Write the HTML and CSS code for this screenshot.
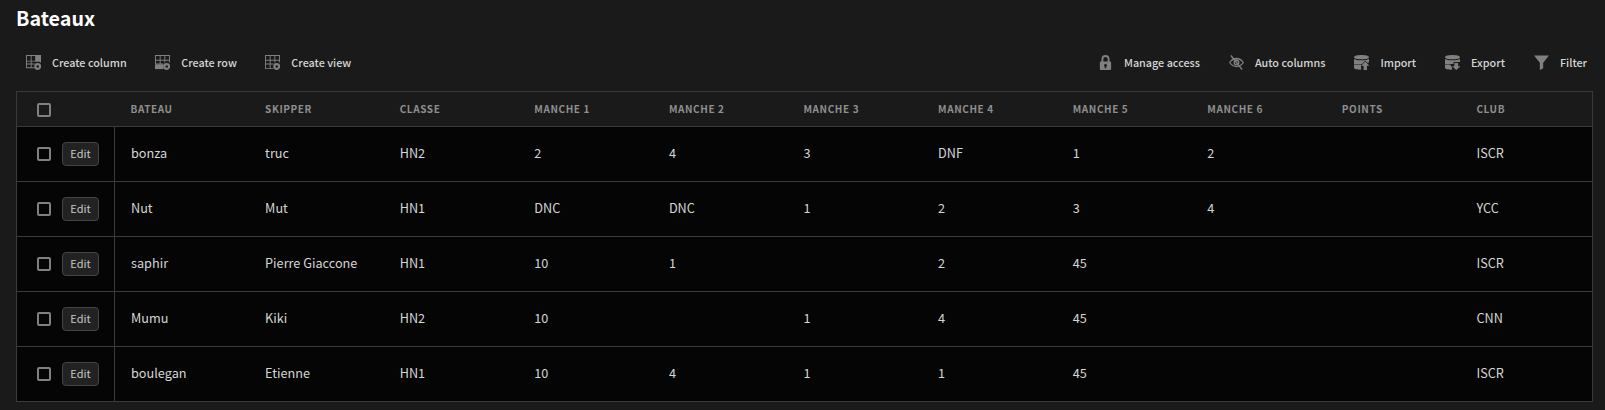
FILE: index.html
```html
<!DOCTYPE html>
<html lang="en">
<head>
    <meta charset="UTF-8">
    <meta name="viewport" content="width=device-width, initial-scale=1.0">
    <title>Bateaux</title>
    <link rel="stylesheet" href="styles.css">
</head>
<body>
    <h1 class="title">Bateaux</h1>
    <div class="toolbar">
        <div class="actions">
            <button class="action">
                <svg class="icon" viewBox="0 0 16 16"><path d="M0 0h16v8h-1V7h-5V1H6v5h4v1H6v2h3v1H6v3h3v1H0zM1 1v5h4V1zM1 7v2h4V7zM1 10v3h4v-3z"/><path d="M10 0h6v7h-6z"/><path fill-rule="evenodd" d="M12.500 8.500a3.700 3.700 0 1 1 0 7.400 3.700 3.700 0 0 1 0-7.400zm0 2.300a1.400 1.400 0 1 0 0 2.800 1.400 1.400 0 0 0 0-2.800z"/></svg>
                Create column
            </button>
            <button class="action">
                <svg class="icon" viewBox="0 0 16 16"><path d="M0 0h16v8h-1V6h-4v2h-1V6H6v3h3v1H0zM1 1v4h4V1zM6 1v4h4V1zM11 1v4h4V1zM1 6v3h4V6z"/><path d="M0 10h9v5H0z"/><path fill-rule="evenodd" d="M12.500 8.500a3.700 3.700 0 1 1 0 7.400 3.700 3.700 0 0 1 0-7.400zm0 2.300a1.400 1.400 0 1 0 0 2.800 1.400 1.400 0 0 0 0-2.800z"/></svg>
                Create row
            </button>
            <button class="action">
                <svg class="icon" viewBox="0 0 16 16"><path d="M0 0h16v8h-1V6h-4v2h-1V6H6v3h3v1H6v4h3v1H0zM1 1v4h4V1zM6 1v4h4V1zM11 1v4h4V1zM1 6v3h4V6zM1 10v4h4v-4z"/><path fill-rule="evenodd" d="M12.500 8.500a3.700 3.700 0 1 1 0 7.400 3.700 3.700 0 0 1 0-7.400zm0 2.300a1.400 1.400 0 1 0 0 2.800 1.400 1.400 0 0 0 0-2.800z"/></svg>
                Create view
            </button>
        </div>
        <div class="actions actions-right">
            <button class="action">
                <svg class="icon" viewBox="0 0 16 16"><path fill-rule="evenodd" d="M8 0a4.300 4.300 0 0 1 4.300 4.300V7h.7a1 1 0 0 1 1 1v7a1 1 0 0 1-1 1H3a1 1 0 0 1-1-1V8a1 1 0 0 1 1-1h.7V4.300A4.300 4.300 0 0 1 8 0zm0 2a2.300 2.300 0 0 0-2.300 2.300V7h4.600V4.300A2.300 2.300 0 0 0 8 2zm0 7.500a1.500 1.500 0 0 0-.8 2.800V14h1.600v-1.700A1.500 1.500 0 0 0 8 9.500z"/></svg>
                Manage access
            </button>
            <button class="action">
                <svg class="icon" viewBox="0 0 16 16"><path fill="none" stroke="currentColor" stroke-width="1.400" d="M.8 8c2-3 4.500-4.300 7.200-4.300S13.200 5 15.200 8c-2 3-4.500 4.300-7.200 4.300S2.800 11 .8 8zM10.400 8a2.400 2.400 0 1 1-4.800 0 2.400 2.400 0 0 1 4.800 0zM2 .5l12 15"/></svg>
                Auto columns
            </button>
            <button class="action">
                <svg class="icon" viewBox="0 0 16 16"><path d="M8 0c3.800 0 8 .7 8 2.300S11.800 4.600 8 4.600 0 3.900 0 2.300 4.200 0 8 0z"/><path d="M0 4c1 1.500 5 1.700 8 1.700s7-.2 8-1.700v3.300c0 .5-.5.900-1.400 1.200L12 6 8.500 9.500H0zM0 10.200v3.300c0 1.300 3.400 2 7.500 2.200V10.200z"/><path d="M12 7l4.500 4.500h-2.700V16h-3.600v-4.500H7.500z"/></svg>
                Import
            </button>
            <button class="action">
                <svg class="icon" viewBox="0 0 16 16"><path d="M8 0c3.800 0 8 .7 8 2.300S11.800 4.600 8 4.600 0 3.900 0 2.300 4.200 0 8 0z"/><path d="M0 4c1 1.500 5 1.700 8 1.700s7-.2 8-1.700v3.500H9v2H0zM0 10.200v3.300c0 1.300 3.400 2 7.500 2.200v-2.500l-2-3z"/><path d="M10 8.500h4v3.500h2.500L12 16l-4.500-4H10z"/></svg>
                Export
            </button>
            <button class="action">
                <svg class="icon" viewBox="0 0 16 16"><path d="M0 .5h16L9.800 8.200V14l-3.200 2h-.4V8.200z"/></svg>
                Filter
            </button>
        </div>
    </div>

    <div class="table-wrap">
        <table class="grid">
            <thead>
                <tr>
                    <th class="select-cell"><span class="checkbox"></span></th>
                    <th>Bateau</th>
                    <th>Skipper</th>
                    <th>Classe</th>
                    <th>Manche 1</th>
                    <th>Manche 2</th>
                    <th>Manche 3</th>
                    <th>Manche 4</th>
                    <th>Manche 5</th>
                    <th>Manche 6</th>
                    <th>Points</th>
                    <th class="last-col">Club</th>
                </tr>
            </thead>
            <tbody>
                <tr>
                    <td class="select-cell"><span class="checkbox"></span><button class="edit">Edit</button></td>
                    <td>bonza</td><td>truc</td><td>HN2</td><td>2</td><td>4</td><td>3</td><td>DNF</td><td>1</td><td>2</td><td></td><td>ISCR</td>
                </tr>
                <tr>
                    <td class="select-cell"><span class="checkbox"></span><button class="edit">Edit</button></td>
                    <td>Nut</td><td>Mut</td><td>HN1</td><td>DNC</td><td>DNC</td><td>1</td><td>2</td><td>3</td><td>4</td><td></td><td>YCC</td>
                </tr>
                <tr>
                    <td class="select-cell"><span class="checkbox"></span><button class="edit">Edit</button></td>
                    <td>saphir</td><td>Pierre Giaccone</td><td>HN1</td><td>10</td><td>1</td><td></td><td>2</td><td>45</td><td></td><td></td><td>ISCR</td>
                </tr>
                <tr>
                    <td class="select-cell"><span class="checkbox"></span><button class="edit">Edit</button></td>
                    <td>Mumu</td><td>Kiki</td><td>HN2</td><td>10</td><td></td><td>1</td><td>4</td><td>45</td><td></td><td></td><td>CNN</td>
                </tr>
                <tr>
                    <td class="select-cell"><span class="checkbox"></span><button class="edit">Edit</button></td>
                    <td>boulegan</td><td>Etienne</td><td>HN1</td><td>10</td><td>4</td><td>1</td><td>1</td><td>45</td><td></td><td></td><td>ISCR</td>
                </tr>
            </tbody>
        </table>
    </div>
</body>
</html>
```

FILE: styles.css
```css
body {
    font-family: "Noto Sans CJK SC", "Noto Sans", sans-serif;
    background-color: #1a1a1a;
    color: #d5d5d5;
    margin: 0;
    height: 410px;
    overflow: hidden;
}
.title {
    margin: 0;
    padding: 0 0 0 16px;
    height: 36px;
    line-height: 35px;
    font-size: 19.7px;
    font-weight: 700;
    color: #fff;
}
.toolbar {
    display: flex;
    justify-content: space-between;
    height: 55px;
    padding: 0 18px 3px 26px;
    align-items: center;
    box-sizing: border-box;
}
.actions {
    display: flex;
    gap: 28.5px;
}
.actions-right {
    gap: 29px;
}
.action {
    display: flex;
    align-items: center;
    gap: 11px;
    padding: 0;
    background: none;
    border: none;
    font-family: inherit;
    font-size: 10.8px;
    font-weight: 500;
    color: #d5d5d5;
}
.icon {
    width: 15px;
    height: 15px;
    fill: #808080;
    color: #808080;
}
.table-wrap {
    margin: 0 12px 0 16px;
    border: 1px solid #3a3a3a;
}
.grid {
    width: 100%;
    table-layout: fixed;
    border-collapse: collapse;
}
.grid th {
    width: 134.6px;
    height: 34px;
    padding: 0 16px 1px;
    box-sizing: border-box;
    background-color: #1a1a1a;
    text-align: left;
    font-size: 10px;
    font-weight: 700;
    letter-spacing: 0.6px;
    text-transform: uppercase;
    color: #8f8f8f;
    border-bottom: 1px solid #3a3a3a;
}
.grid th.last-col {
    width: auto;
}
.grid td {
    height: 55px;
    padding: 0 16px 2px;
    box-sizing: border-box;
    background-color: #050505;
    font-size: 12.7px;
    color: #d5d5d5;
    border-bottom: 1px solid #3a3a3a;
}
.grid tr:last-child td {
    border-bottom: none;
}
.grid .select-cell {
    width: 97.500px;
    padding: 0 0 0 20px;
}
.grid td.select-cell {
    border-right: 1px solid #3a3a3a;
}
.checkbox {
    display: inline-block;
    vertical-align: middle;
    width: 14px;
    height: 14px;
    box-sizing: border-box;
    border: 2px solid #808080;
    border-radius: 2px;
}
.edit {
    vertical-align: middle;
    margin-left: 11px;
    width: 37px;
    height: 24px;
    padding: 0 0 1px;
    background-color: #222;
    border: 1px solid #444;
    border-radius: 4px;
    font-family: inherit;
    font-size: 11px;
    color: #c8c8c8;
}
```
